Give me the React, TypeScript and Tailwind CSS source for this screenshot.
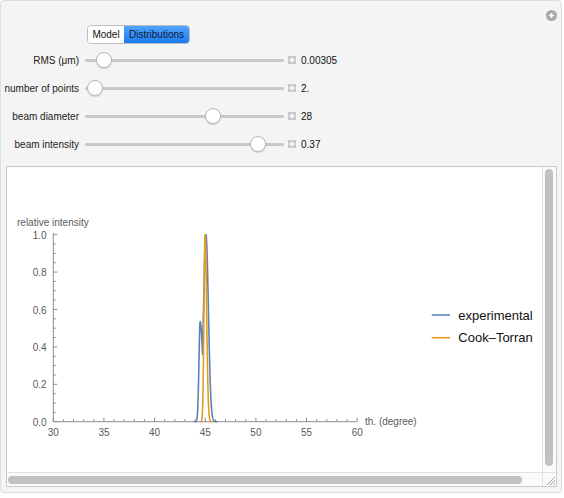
import React from "react";

const X0 = 46.3;
const Y0 = 254.7;
const SX = 10.13;
const SY = 187;

const px = (d: number) => X0 + (d - 30) * SX;
const py = (v: number) => Y0 - v * SY;

const gauss = (x: number, c: number, sl: number, sr: number) => {
  const s = x < c ? sl : sr;
  return Math.exp(-(((x - c) / s) ** 2));
};

function curve(f: (x: number) => number, a: number, b: number) {
  const pts: string[] = [];
  const n = 240;
  for (let i = 0; i <= n; i++) {
    const x = a + ((b - a) * i) / n;
    pts.push(`${px(x).toFixed(2)},${py(f(x)).toFixed(2)}`);
  }
  return "M" + pts.join(" L");
}

const experimental = (x: number) =>
  x < 44.74 ? 0.535 * gauss(x, 44.5, 0.17, 0.37) : gauss(x, 45.07, 0.34, 0.34);
const cookTorrance = (x: number) => gauss(x, 44.98, 0.15, 0.22);

const sliders = [
  { label: "RMS (μm)", value: "0.00305", thumb: 19 },
  { label: "number of points", value: "2.", thumb: 10 },
  { label: "beam diameter", value: "28", thumb: 128 },
  { label: "beam intensity", value: "0.37", thumb: 173 },
];

function PlusBox() {
  return (
    <div className="w-[8px] h-[8px] bg-[#c9c9c9] flex items-center justify-center">
      <svg width="6" height="6" viewBox="0 0 6 6">
        <path d="M3 0.5V5.5M0.5 3H5.5" stroke="#fff" strokeWidth="1.4" />
      </svg>
    </div>
  );
}

function SliderRow({ label, value, thumb }: { label: string; value: string; thumb: number }) {
  return (
    <div className="h-[28px] flex items-center">
      <div className="w-[78px] text-right text-[10px] text-[#1c1c1c] whitespace-nowrap">{label}</div>
      <div className="relative ml-[6px] w-[199px] h-[3px] rounded-full bg-[#c8c8c8]">
        <div
          className="absolute top-[-7px] w-[16px] h-[16px] rounded-full bg-white border border-[#b9b9b9] shadow-[0_1px_1px_rgba(0,0,0,0.15)]"
          style={{ left: thumb - 8 }}
        />
      </div>
      <div className="ml-[4px]">
        <PlusBox />
      </div>
      <div className="ml-[5px] text-[10px] text-[#111]">{value}</div>
    </div>
  );
}

function Chart() {
  const xTicks: number[] = [];
  for (let d = 30; d <= 60; d++) xTicks.push(d);
  const yTicks: number[] = [];
  for (let i = 0; i <= 20; i++) yTicks.push(i / 20);
  const axis = "#8c8c8c";
  const lbl = "#5a5a5a";
  return (
    <svg width="526" height="305" viewBox="0 0 526 305" className="block">
      <text x="10" y="59.3" fontSize="10" fill={lbl}>
        relative intensity
      </text>
      <line x1={X0} y1={Y0} x2={px(60)} y2={Y0} stroke={axis} strokeWidth="1" />
      <line x1={X0} y1={Y0} x2={X0} y2={66} stroke={axis} strokeWidth="1" />
      {xTicks.map((d) => {
        const major = d % 5 === 0;
        return (
          <g key={d}>
            <line x1={px(d)} y1={Y0} x2={px(d)} y2={Y0 - (major ? 4 : 2.5)} stroke={axis} strokeWidth="1" />
            {major && (
              <text x={px(d)} y={Y0 + 14} fontSize="10" fill={lbl} textAnchor="middle">
                {d}
              </text>
            )}
          </g>
        );
      })}
      {yTicks.map((v, i) => {
        const major = i % 4 === 0;
        return (
          <g key={i}>
            <line x1={X0} y1={py(v)} x2={X0 + (major ? 4 : 2.5)} y2={py(v)} stroke={axis} strokeWidth="1" />
            {major && (
              <text x={39.7} y={py(v) + 4} fontSize="10" fill={lbl} textAnchor="end">
                {v.toFixed(1)}
              </text>
            )}
          </g>
        );
      })}
      <text x="358" y={Y0 + 3.5} fontSize="10" fill={lbl}>
        th. (degree)
      </text>
      <path d={curve(experimental, 43.9, 46.2)} fill="none" stroke="#5e81b5" strokeWidth="1.6" strokeLinejoin="round" />
      <path d={curve(cookTorrance, 44.5, 45.7)} fill="none" stroke="#e19c24" strokeWidth="1.6" strokeLinejoin="round" />
      <line x1="424.7" y1="148" x2="443" y2="148" stroke="#5e81b5" strokeWidth="1.6" />
      <line x1="424.7" y1="170.7" x2="443" y2="170.7" stroke="#e19c24" strokeWidth="1.6" />
      <text x="451.3" y="152.6" fontSize="13" fill="#111">
        experimental
      </text>
      <text x="451.3" y="175.3" fontSize="13" fill="#111">
        Cook–Torrance
      </text>
    </svg>
  );
}

export default function App() {
  return (
    <div className="w-[564px] h-[498px] bg-white font-['Liberation_Sans',Arial,sans-serif]">
      <div className="relative w-[562px] h-[493px] bg-[#f4f4f4] border border-[#dedede] rounded-[4px]">
        <div className="absolute right-[4px] top-[9px] w-[11px] h-[11px] rounded-full bg-[#a9a9a9] flex items-center justify-center">
          <svg width="7" height="7" viewBox="0 0 7 7">
            <path d="M3.5 1V6M1 3.5H6" stroke="#fff" strokeWidth="1.6" />
          </svg>
        </div>

        <div className="pt-[24px] pl-[86px] flex">
          <div className="flex h-[19px] rounded-[4px] border border-[#bdbdbd] overflow-hidden text-[10px]">
            <div className="w-[36px] bg-white text-[#111] flex items-center justify-center">Model</div>
            <div className="w-[65px] bg-linear-to-b from-[#4fa3fb] to-[#1a7cf1] text-[#0b1a33] flex items-center justify-center">
              Distributions
            </div>
          </div>
        </div>

        <div className="mt-[2px] flex flex-col">
          {sliders.map((s) => (
            <SliderRow key={s.label} {...s} />
          ))}
        </div>

        <div className="mt-[8px] ml-[5px] w-[551px] h-[321px] border border-[#c9c9c9] bg-white flex flex-col">
          <div className="flex h-[305px]">
            <div className="w-[535px] overflow-hidden">
              <Chart />
            </div>
            <div className="w-[14px] border-l border-[#e2e2e2] bg-[#fafafa] pl-[2px] pt-[2px]">
              <div className="w-[8px] h-[297px] rounded-full bg-[#c1c1c1]" />
            </div>
          </div>
          <div className="flex h-[14px] border-t border-[#e2e2e2]">
            <div className="w-[535px] pl-[1px] pt-[3px] bg-[#fafafa]">
              <div className="w-[514px] h-[8px] rounded-full bg-[#c1c1c1]" />
            </div>
            <div className="w-[14px] border-l border-[#e2e2e2] bg-[#fafafa] flex items-end justify-end">
              <svg width="13" height="13" viewBox="0 0 13 13">
                <path d="M12 4L4 12M12 7L7 12M12 10L10 12" stroke="#8a8a8a" strokeWidth="0.8" />
              </svg>
            </div>
          </div>
        </div>
      </div>
    </div>
  );
}
